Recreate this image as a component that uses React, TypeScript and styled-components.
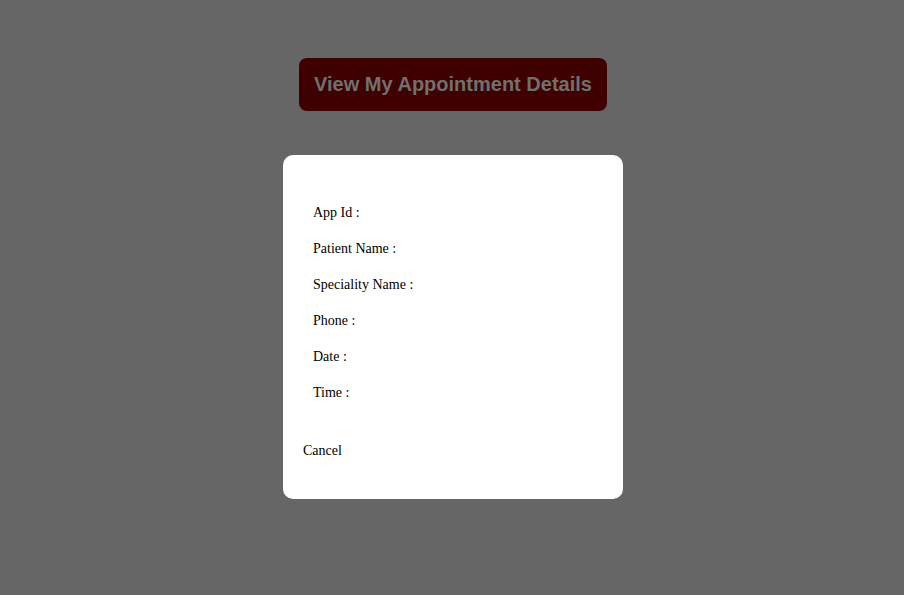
// Dependencies.
import styled, {createGlobalStyle} from 'styled-components'

// Global Style.
const GlobalStyle = createGlobalStyle`
  html, body {
    margin: 0;
    padding: 0;
    background: #666666;
  }
`

// Page.
const Page = styled.div`
  align-items: center;
  box-sizing: border-box;
  display: flex;
  flex-direction: column;
  height: 595px;
  padding: 58px 0 0 2px;
  width: 100%;
`

// Open Button.
const OpenButton = styled.button`
  background: #3e0000;
  border: none;
  border-radius: 8px;
  color: #707070;
  cursor: pointer;
  font-family: "Liberation Sans", Arial, sans-serif;
  font-size: 20px;
  font-weight: 700;
  height: 53px;
  line-height: 23px;
  padding: 0 15px;
  width: 308px;
`

// Overlay.
const Overlay = styled.div`
  display: flex;
  inset: 0;
  justify-content: center;
  padding-top: 155px;
  position: fixed;
  padding-left: 2px;
`

// Modal.
const Modal = styled.div`
  align-self: flex-start;
  background: #ffffff;
  border-radius: 10px;
  box-sizing: border-box;
  color: #000000;
  display: flex;
  flex-direction: column;
  font-family: "Liberation Serif", "Times New Roman", serif;
  font-size: 14px;
  height: 344px;
  padding: 20px 20px 40px;
  width: 340px;
`

// Details.
const Details = styled.div`
  display: flex;
  flex-direction: column;
  gap: 20px;
  padding: 30px 10px 0;
`

// Row.
const Row = styled.div`
  line-height: 16px;
`

// Cancel Button.
const CancelButton = styled.button`
  align-self: flex-start;
  background: transparent;
  border: none;
  color: #000000;
  cursor: pointer;
  font-family: inherit;
  font-size: 14px;
  line-height: 16px;
  margin-top: 42px;
  padding: 0;
`

// Fields.
const fields = ['App Id', 'Patient Name', 'Speciality Name', 'Phone', 'Date', 'Time']

// App.
export default function App() {
  return <>
    <GlobalStyle/>

    <Page>
      <OpenButton>View My Appointment Details</OpenButton>
    </Page>

    {/* Appointment Modal. */}
    <Overlay>
      <Modal>
        <Details>
          {fields.map(field => <Row key={field}>{field} :</Row>)}
        </Details>
        <CancelButton>Cancel</CancelButton>
      </Modal>
    </Overlay>
  </>
}
